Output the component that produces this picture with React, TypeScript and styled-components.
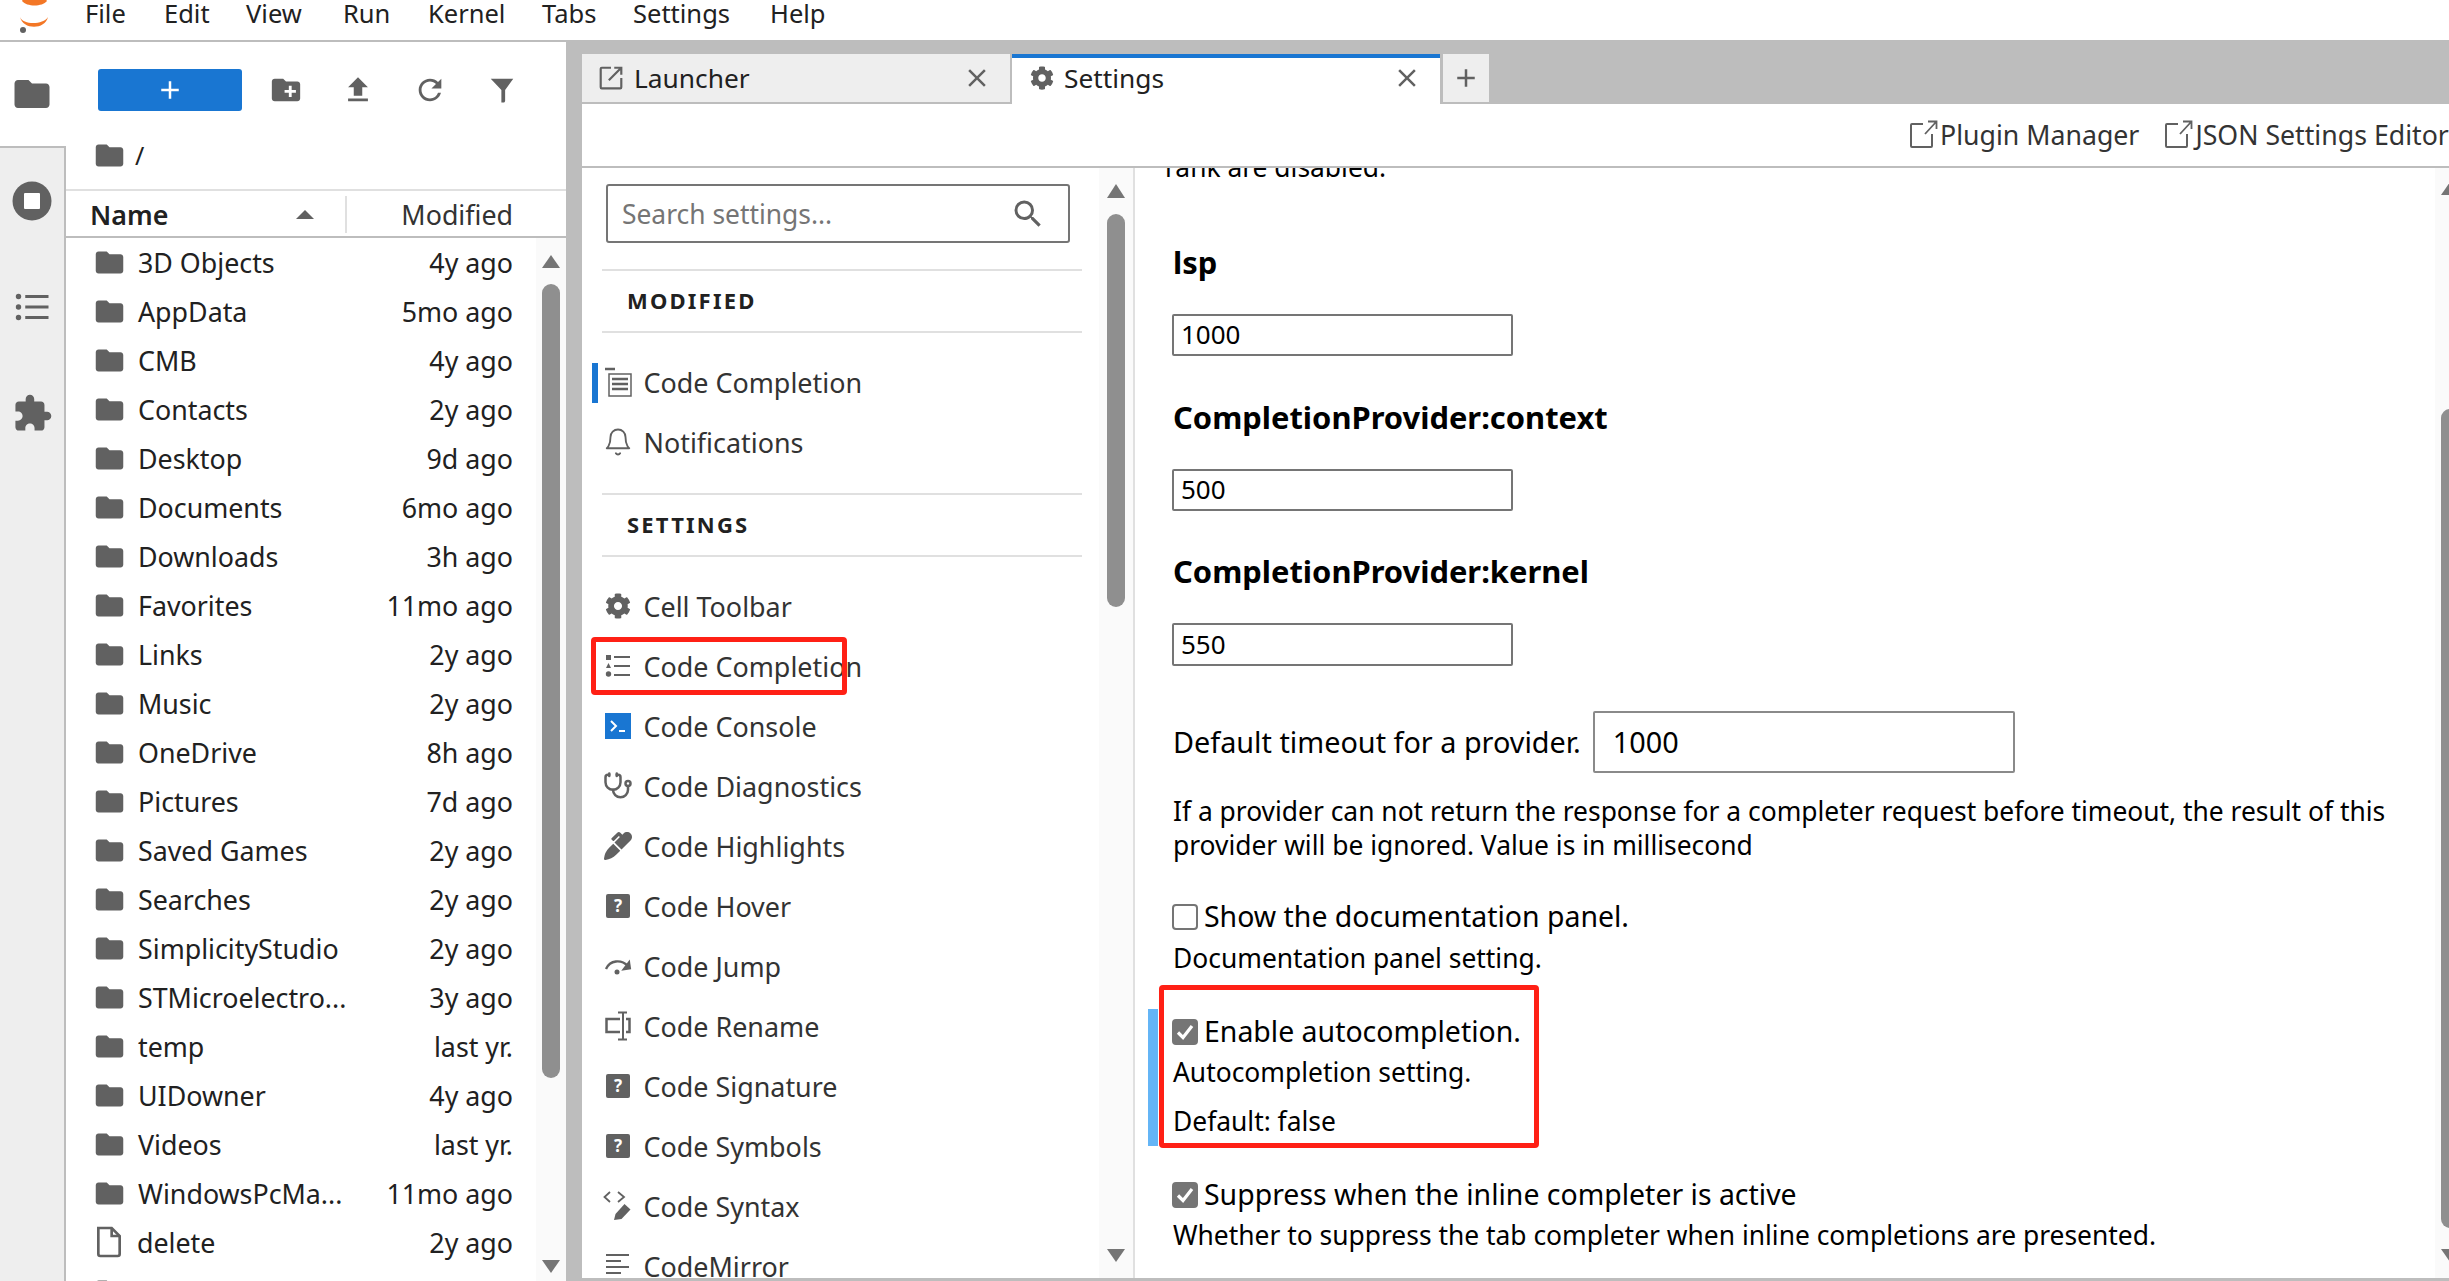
import styled, { createGlobalStyle } from "styled-components";
import type { ReactNode } from "react";
import { FaCog, FaMarker } from "react-icons/fa";
import { MdFolder, MdCreateNewFolder, MdFileUpload, MdRefresh, MdClose, MdAdd, MdSearch, MdExtension } from "react-icons/md";
import { LuStethoscope, LuBell } from "react-icons/lu";

const GlobalStyle = createGlobalStyle`
  html, body { margin: 0; padding: 0; height: 100%; overflow: hidden; background: #fff; }
  * { box-sizing: border-box; }
  body { font-family: "Noto Sans", "Open Sans", sans-serif; color: #212121; }
`;

const files: [string, string][] = [
  ["3D Objects", "4y ago"], ["AppData", "5mo ago"], ["CMB", "4y ago"], ["Contacts", "2y ago"],
  ["Desktop", "9d ago"], ["Documents", "6mo ago"], ["Downloads", "3h ago"], ["Favorites", "11mo ago"],
  ["Links", "2y ago"], ["Music", "2y ago"], ["OneDrive", "8h ago"], ["Pictures", "7d ago"],
  ["Saved Games", "2y ago"], ["Searches", "2y ago"], ["SimplicityStudio", "2y ago"],
  ["STMicroelectro...", "3y ago"], ["temp", "last yr."], ["UIDowner", "4y ago"], ["Videos", "last yr."],
  ["WindowsPcMa...", "11mo ago"],
];

const Shell = styled.div`
  position: relative;
  width: 2449px;
  height: 1281px;
  overflow: hidden;
  display: flex;
  flex-direction: column;
`;

const MenuBar = styled.div`
  height: 42px;
  flex: none;
  border-bottom: 2px solid #bdbdbd;
  display: flex;
  align-items: flex-start;
  padding-left: 18px;
  overflow: hidden;
`;

const MenuItem = styled.div<{ $w: number }>`
  width: ${(p) => p.$w}px;
  font-size: 25.5px;
  line-height: 26px;
  color: #212121;
  flex: none;
`;

const Workspace = styled.div`
  flex: 1;
  min-height: 0;
  display: flex;
  background: #bdbdbd;
`;

const ActivityBar = styled.div`
  width: 66px;
  flex: none;
  background: #eeeeee;
  border-right: 2px solid #bdbdbd;
  display: flex;
  flex-direction: column;
`;

const ActivityTab = styled.div<{ $active?: boolean }>`
  height: 106px;
  margin-right: ${(p) => (p.$active ? "-2px" : "0")};
  padding-right: ${(p) => (p.$active ? "2px" : "0")};
  background: ${(p) => (p.$active ? "#fff" : "transparent")};
  border-bottom: ${(p) => (p.$active ? "2px solid #bdbdbd" : "none")};
  display: flex;
  align-items: center;
  justify-content: center;
  color: #616161;
`;

const FilePanel = styled.div`
  width: 500px;
  flex: none;
  background: #fff;
  display: flex;
  flex-direction: column;
  overflow: hidden;
`;

const FileToolbar = styled.div`
  height: 48px;
  margin-top: 24px;
  display: flex;
  align-items: center;
  padding-left: 32px;
  flex: none;
`;

const NewButton = styled.div`
  width: 144px;
  height: 42px;
  background: #1976d2;
  border-radius: 3px;
  color: #fff;
  display: flex;
  align-items: center;
  justify-content: center;
`;

const ToolButton = styled.div<{ $first?: boolean }>`
  width: 72px;
  margin-left: ${(p) => (p.$first ? "8px" : "0")};
  display: flex;
  justify-content: center;
  color: #616161;
`;

const Crumbs = styled.div`
  height: 48px;
  margin-top: 17px;
  display: flex;
  align-items: center;
  padding-left: 27px;
  gap: 9px;
  color: #616161;
  font-size: 25px;
  flex: none;
  span { color: #212121; }
`;

const HeaderRow = styled.div`
  height: 49px;
  margin-top: 10px;
  border-top: 2px solid #e0e0e0;
  border-bottom: 2px solid #bdbdbd;
  display: flex;
  align-items: center;
  flex: none;
  font-size: 26.8px;
  padding-top: 2px;
`;

const NameHead = styled.div`
  width: 281px;
  padding-left: 24px;
  height: 37px;
  display: flex;
  align-items: center;
  justify-content: space-between;
  padding-right: 31px;
  font-weight: 600;
  border-right: 2px solid #e0e0e0;
`;

const Caret = styled.div<{ $down?: boolean; $tall?: number }>`
  width: 0;
  height: 0;
  flex: none;
  border-left: 9px solid transparent;
  border-right: 9px solid transparent;
  ${(p) =>
    p.$down
      ? `border-top: ${p.$tall || 13}px solid #757575;`
      : `border-bottom: ${p.$tall || 9}px solid ${p.$tall ? "#757575" : "#616161"};`}
`;

const ModifiedHead = styled.div`
  flex: 1;
  text-align: right;
  padding-right: 53px;
  color: #333;
`;

const FileBody = styled.div`
  flex: 1;
  min-height: 0;
  display: flex;
  overflow: hidden;
`;

const FileList = styled.div`
  width: 470px;
  flex: none;
`;

const FileRow = styled.div`
  height: 49px;
  display: flex;
  align-items: center;
  padding-left: 27px;
  padding-right: 23px;
  padding-bottom: 1px;
  font-size: 26.8px;
  color: #212121;
  svg { flex: none; color: #616161; }
`;

const FileName = styled.div`
  margin-left: 12px;
  flex: 1;
  white-space: nowrap;
`;

const FileTime = styled.div`
  white-space: nowrap;
`;

const ScrollTrack = styled.div<{ $w: number; $pad: number; $start?: boolean }>`
  width: ${(p) => p.$w}px;
  flex: none;
  background: #fafafa;
  display: flex;
  flex-direction: column;
  align-items: ${(p) => (p.$start ? "flex-start" : "center")};
  padding-left: ${(p) => p.$pad}px;
`;

const ScrollThumb = styled.div<{ $top: number; $h: number }>`
  width: 18px;
  height: ${(p) => p.$h}px;
  margin-top: ${(p) => p.$top}px;
  background: #8f8f8f;
  border-radius: 9px;
  flex: none;
`;

const Spacer = styled.div`
  flex: 1;
`;

const Main = styled.div`
  margin-left: 16px;
  flex: 1;
  min-width: 0;
  display: flex;
  flex-direction: column;
`;

const TabBar = styled.div`
  height: 62px;
  flex: none;
  padding-top: 12px;
  display: flex;
  align-items: stretch;
`;

const Tab = styled.div<{ $active?: boolean; $w: number }>`
  width: ${(p) => p.$w}px;
  flex: none;
  background: ${(p) => (p.$active ? "#fff" : "#eeeeee")};
  border-top: ${(p) => (p.$active ? "4px solid #1976d2" : "none")};
  border-right: ${(p) => (p.$active ? "none" : "2px solid #bdbdbd")};
  border-bottom: ${(p) => (p.$active ? "none" : "2px solid #bdbdbd")};
  display: flex;
  align-items: center;
  padding: ${(p) => (p.$active ? "0 18px 6px 18px" : "0 18px 0 16px")};
  font-size: 26.3px;
  color: #212121;
  svg { flex: none; color: #616161; }
`;

const TabLabel = styled.div`
  flex: 1;
  margin-left: 10px;
`;

const PlusTab = styled.div`
  width: 46px;
  margin-left: 3px;
  flex: none;
  background: #eeeeee;
  border-bottom: 2px solid #bdbdbd;
  display: flex;
  align-items: center;
  justify-content: center;
  color: #616161;
`;

const Toolbar = styled.div`
  height: 64px;
  flex: none;
  background: #fff;
  border-bottom: 2px solid #bdbdbd;
  display: flex;
  align-items: center;
  padding: 0 0 2px 1327px;
  white-space: nowrap;
  overflow: hidden;
  font-size: 26.7px;
  color: #333;
`;

const ToolLink = styled.div<{ $gap?: number }>`
  display: flex;
  align-items: center;
  margin-left: ${(p) => p.$gap || 0}px;
  flex: none;
  svg { flex: none; color: #616161; margin-right: 2px; }
`;

const SettingsBody = styled.div`
  flex: 1;
  min-height: 0;
  display: flex;
  background: #fff;
  overflow: hidden;
  border-bottom: 3px solid #bdbdbd;
`;

const Sidebar = styled.div`
  width: 517px;
  flex: none;
  padding: 16px 0 0 20px;
  overflow: hidden;
`;

const SearchBox = styled.div`
  width: 464px;
  height: 59px;
  margin-left: 4px;
  border: 2px solid #757575;
  border-radius: 3px;
  display: flex;
  align-items: center;
  justify-content: space-between;
  padding: 0 22px 0 14px;
  font-size: 26.4px;
  color: #757575;
  svg { color: #616161; }
`;

const Section = styled.div<{ $mt: number }>`
  margin-top: ${(p) => p.$mt}px;
  width: 480px;
  height: 64px;
  border-top: 2px solid #e0e0e0;
  border-bottom: 2px solid #e0e0e0;
  display: flex;
  align-items: center;
  padding: 0 0 2px 25px;
  font-size: 22px;
  font-weight: 700;
  letter-spacing: 2.2px;
  color: #212121;
`;

const NavList = styled.div<{ $mt: number }>`
  margin-top: ${(p) => p.$mt}px;
`;

const NavItem = styled.div<{ $selected?: boolean }>`
  height: 60px;
  margin-left: -10px;
  display: flex;
  align-items: center;
  position: relative;
  padding: 0 0 2px 11px;
  font-size: 26.9px;
  color: #333;
  white-space: nowrap;
  &::before {
    content: "";
    display: ${(p) => (p.$selected ? "block" : "none")};
    position: absolute;
    left: 0;
    top: 10px;
    width: 6px;
    height: 40px;
    background: #1976d2;
  }
`;

const NavIcon = styled.div`
  width: 30px;
  height: 34px;
  margin-right: 10.5px;
  flex: none;
  display: flex;
  align-items: center;
  justify-content: center;
  color: #616161;
`;

const Divider = styled.div`
  width: 2px;
  flex: none;
  background: #e0e0e0;
`;

const Form = styled.div`
  flex: 1;
  min-width: 0;
  padding-left: 38px;
  overflow: hidden;
  font-size: 26.4px;
  color: #000;
`;

const ClippedLine = styled.div`
  margin: -19px 0 0 -8px;
  height: 36px;
  line-height: 36px;
  white-space: nowrap;
`;

const FieldTitle = styled.div<{ $mt: number }>`
  margin-top: ${(p) => p.$mt}px;
  height: 40px;
  line-height: 37px;
  font-weight: 700;
  font-size: 30.9px;
`;

const TextField = styled.div<{ $h?: number }>`
  margin: 30px 0 0 -1px;
  width: 341px;
  height: ${(p) => p.$h || 42}px;
  border: 2px solid #757575;
  border-radius: 2px;
  padding: 0 0 2px 7px;
  display: flex;
  align-items: center;
  font-size: 26px;
`;

const InlineRow = styled.div`
  margin-top: 45px;
  height: 62px;
  display: flex;
  align-items: center;
  font-size: 28.8px;
`;

const InlineLabel = styled.div`
  margin-bottom: 2px;
`;

const WideField = styled.div`
  margin-left: 12px;
  width: 422px;
  height: 62px;
  border: 2px solid #8a8a8a;
  border-radius: 2px;
  padding: 0 0 2px 18px;
  display: flex;
  align-items: center;
`;

const HelpText = styled.div`
  margin-top: 21px;
  width: 1240px;
  line-height: 34px;
`;

const Line = styled.div<{ $mt: number }>`
  margin-top: ${(p) => p.$mt}px;
  height: 36px;
  padding-bottom: 2px;
  line-height: 34px;
  white-space: nowrap;
  display: flex;
  align-items: center;
`;

const CheckLine = styled(Line)`
  font-size: 28.45px;
`;

const Check = styled.div<{ $on?: boolean }>`
  width: 26px;
  height: 26px;
  margin: 2px 6px 0 -1px;
  flex: none;
  border-radius: 4px;
  border: 2px solid #757575;
  background: ${(p) => (p.$on ? "#757575" : "#fff")};
  display: flex;
  align-items: center;
  justify-content: center;
`;

const ModifiedField = styled.div`
  margin: 32px 0 0 -25px;
  padding: 5px 0 6px 15px;
  border-left: 10px solid #64b5f6;
`;

const Annotation = styled.div<{ $x: number; $y: number; $w: number; $h: number }>`
  position: absolute;
  left: ${(p) => p.$x}px;
  top: ${(p) => p.$y}px;
  width: ${(p) => p.$w}px;
  height: ${(p) => p.$h}px;
  border: 5px solid #ff2015;
  border-radius: 4px;
  pointer-events: none;
`;

const Svg = ({ size, children }: { size: number; children: ReactNode }) => (
  <svg width={size} height={size} viewBox="0 0 24 24" fill="none">{children}</svg>
);

const JupyterLogo = () => (
  <svg width="32" height="34" viewBox="0 0 32 34" style={{ display: "block", marginTop: -1 }}>
    <path d="M2 18c3 8 23 8 28 0-3 13-25 13-28 0z" fill="#f37726" />
    <path d="M4 2C9 8 24 8 29 2c-2-3-3-3-4-3H8C6-1 5 0 4 2z" fill="#f37726" />
    <circle cx="5" cy="31" r="3" fill="#616161" />
  </svg>
);

const StopIcon = () => (
  <svg width="40" height="40" viewBox="0 0 40 40">
    <circle cx="20" cy="20" r="19.5" fill="#616161" />
    <rect x="12" y="12" width="16" height="16" rx="1" fill="#fff" />
  </svg>
);

const ListIcon = ({ size }: { size: number }) => (
  <Svg size={size}>
    <circle cx="3" cy="5" r="1.8" fill="#616161" />
    <circle cx="3" cy="12" r="1.8" fill="#616161" />
    <circle cx="3" cy="19" r="1.8" fill="#616161" />
    <path d="M7.5 5H23M7.5 12H23M7.5 19H23" stroke="#616161" strokeWidth="2" />
  </Svg>
);

const FilterIcon = () => (
  <Svg size={30}>
    <path d="M3 3h18l-6.5 9v8.5c0 1-.8 1.5-1.5 1.5h-1.5v-10z" fill="#616161" />
  </Svg>
);

const FileIcon = () => (
  <Svg size={32}>
    <path d="M4 1.5h10l6 6V21c0 .8-.7 1.5-1.5 1.5h-13C4.700 22.500 4 21.800 4 21z" stroke="#616161" strokeWidth="2" />
    <path d="M14 1.500V7.500h6" stroke="#616161" strokeWidth="2" />
  </Svg>
);

const LaunchIcon = () => (
  <Svg size={26}>
    <path d="M12 2.500H3.500c-.6 0-1 .4-1 1v17c0 .6.4 1 1 1h17c.6 0 1-.4 1-1V12" stroke="#616161" strokeWidth="2" />
    <path d="M15 2.500h6.500V9M21 3L10 14" stroke="#616161" strokeWidth="2" />
  </Svg>
);

const ExternalIcon = () => (
  <svg width="29" height="29" viewBox="0 0 29 29" fill="none">
    <path d="M14 4H3c-.6 0-1 .4-1 1v21c0 .6.400 1 1 1h19c.6 0 1-.4 1-1V14" stroke="#616161" strokeWidth="2" />
    <path d="M19 1.500h8.500V9M27 2L16 14" stroke="#616161" strokeWidth="1.800" />
  </svg>
);

const CompletionDocIcon = () => (
  <svg width="28" height="30" viewBox="0 0 28 30" fill="none">
    <path d="M1 2h10" stroke="#616161" strokeWidth="2.500" />
    <rect x="5" y="7" width="22" height="22" stroke="#616161" strokeWidth="1.500" fill="#fff" />
    <path d="M8 12h16M8 17h16M8 22h16" stroke="#616161" strokeWidth="2.500" />
  </svg>
);

const CompletionListIcon = () => (
  <svg width="26" height="24" viewBox="0 0 26 24">
    <rect x="1" y="1" width="5" height="5" fill="#616161" />
    <path d="M3.500 9l2.500 5H1z" fill="#616161" />
    <circle cx="3.500" cy="20" r="2.700" fill="#616161" />
    <path d="M9 3h16M9 12h16M9 21h16" stroke="#616161" strokeWidth="2" />
  </svg>
);

const ConsoleIcon = () => (
  <svg width="26" height="26" viewBox="0 0 26 26">
    <rect width="26" height="26" fill="#1976d2" />
    <path d="M6 8l5 5-5 5" stroke="#fff" strokeWidth="2" fill="none" />
    <path d="M14 18h6" stroke="#fff" strokeWidth="2" />
  </svg>
);

const HelpIcon = () => (
  <svg width="24" height="24" viewBox="0 0 24 24">
    <rect width="24" height="24" rx="2" fill="#616161" />
    <text x="12" y="18" textAnchor="middle" fontSize="17" fontWeight="700" fill="#fff" fontFamily="Noto Sans">?</text>
  </svg>
);

const JumpIcon = () => (
  <svg width="28" height="20" viewBox="0 0 28 20" fill="none">
    <path d="M2 13C6 4 17 3 24 10" stroke="#616161" strokeWidth="2.400" />
    <path d="M26.500 4v10h-10z" fill="#616161" transform="rotate(-8 22 9)" />
    <circle cx="13" cy="16" r="2.500" fill="#616161" />
  </svg>
);

const RenameIcon = () => (
  <svg width="26" height="30" viewBox="0 0 26 30" fill="none">
    <path d="M15 8H1.500v13H15M21 8h3.500v13H21" stroke="#616161" strokeWidth="2.500" />
    <path d="M13 1.500h4.500M17.500 1.500h4.500M18 1.500v27M13 28.500h9" stroke="#616161" strokeWidth="2" />
  </svg>
);

const SyntaxIcon = () => (
  <svg width="30" height="32" viewBox="0 0 30 32" fill="none">
    <path d="M7 2L1.500 7 7 12M15 2l6 5-6 5" stroke="#616161" strokeWidth="1.800" />
    <path d="M11 30l1.500-6 9-10 6 5.500-9 9.500z" fill="#616161" />
  </svg>
);

const MirrorIcon = () => (
  <svg width="26" height="26" viewBox="0 0 26 26">
    <path d="M1 2h23M1 8h15M1 14h23M1 20h15M1 26h23" stroke="#616161" strokeWidth="2" />
  </svg>
);

const navSettings: [ReactNode, string][] = [
  [<FaCog size={26} />, "Cell Toolbar"],
  [<CompletionListIcon />, "Code Completion"],
  [<ConsoleIcon />, "Code Console"],
  [<LuStethoscope size={30} />, "Code Diagnostics"],
  [<FaMarker size={28} />, "Code Highlights"],
  [<HelpIcon />, "Code Hover"],
  [<JumpIcon />, "Code Jump"],
  [<RenameIcon />, "Code Rename"],
  [<HelpIcon />, "Code Signature"],
  [<HelpIcon />, "Code Symbols"],
  [<SyntaxIcon />, "Code Syntax"],
  [<MirrorIcon />, "CodeMirror"],
];

const CheckMark = () => (
  <svg width="18" height="16" viewBox="0 0 18 16" fill="none">
    <path d="M2 8.500l5 5L16 2" stroke="#fff" strokeWidth="3.200" />
  </svg>
);

export default function App() {
  return (
    <Shell>
      <GlobalStyle />
      <MenuBar>
        <JupyterLogo />
        <MenuItem $w={35} />
        <MenuItem $w={79}>File</MenuItem>
        <MenuItem $w={82}>Edit</MenuItem>
        <MenuItem $w={97}>View</MenuItem>
        <MenuItem $w={85}>Run</MenuItem>
        <MenuItem $w={114}>Kernel</MenuItem>
        <MenuItem $w={91}>Tabs</MenuItem>
        <MenuItem $w={137}>Settings</MenuItem>
        <MenuItem $w={80}>Help</MenuItem>
      </MenuBar>
      <Workspace>
        <ActivityBar>
          <ActivityTab $active><MdFolder size={42} /></ActivityTab>
          <ActivityTab><StopIcon /></ActivityTab>
          <ActivityTab><ListIcon size={36} /></ActivityTab>
          <ActivityTab><MdExtension size={41} /></ActivityTab>
        </ActivityBar>
        <FilePanel>
          <FileToolbar>
            <NewButton><MdAdd size={30} /></NewButton>
            <ToolButton $first><MdCreateNewFolder size={34} /></ToolButton>
            <ToolButton><MdFileUpload size={34} /></ToolButton>
            <ToolButton><MdRefresh size={34} /></ToolButton>
            <ToolButton><FilterIcon /></ToolButton>
          </FileToolbar>
          <Crumbs><MdFolder size={33} /><span>/</span></Crumbs>
          <HeaderRow>
            <NameHead>Name<Caret /></NameHead>
            <ModifiedHead>Modified</ModifiedHead>
          </HeaderRow>
          <FileBody>
            <FileList>
              {files.map(([name, time]) => (
                <FileRow key={name}>
                  <MdFolder size={33} />
                  <FileName>{name}</FileName>
                  <FileTime>{time}</FileTime>
                </FileRow>
              ))}
              <FileRow>
                <FileIcon />
                <FileName>delete</FileName>
                <FileTime>2y ago</FileTime>
              </FileRow>
              <FileRow>
                <MdFolder size={33} />
                <FileName>tutorials</FileName>
                <FileTime>2y ago</FileTime>
              </FileRow>
            </FileList>
            <ScrollTrack $w={30} $pad={0}>
              <Caret $tall={13} style={{ marginTop: 17 }} />
              <ScrollThumb $top={16} $h={794} />
              <Spacer />
              <Caret $down style={{ marginBottom: 8 }} />
            </ScrollTrack>
          </FileBody>
        </FilePanel>
        <Main>
          <TabBar>
            <Tab $w={430}>
              <LaunchIcon />
              <TabLabel>Launcher</TabLabel>
              <MdClose size={30} />
            </Tab>
            <Tab $active $w={428}>
              <FaCog size={24} />
              <TabLabel>Settings</TabLabel>
              <MdClose size={30} />
            </Tab>
            <PlusTab><MdAdd size={30} /></PlusTab>
          </TabBar>
          <Toolbar>
            <ToolLink><ExternalIcon />Plugin Manager</ToolLink>
            <ToolLink $gap={25}><ExternalIcon />JSON Settings Editor</ToolLink>
          </Toolbar>
          <SettingsBody>
            <Sidebar>
              <SearchBox>Search settings...<MdSearch size={36} /></SearchBox>
              <Section $mt={26}>MODIFIED</Section>
              <NavList $mt={20}>
                <NavItem $selected><NavIcon><CompletionDocIcon /></NavIcon>Code Completion</NavItem>
                <NavItem><NavIcon><LuBell size={34} strokeWidth={1.5} /></NavIcon>Notifications</NavItem>
              </NavList>
              <Section $mt={20}>SETTINGS</Section>
              <NavList $mt={20}>
                {navSettings.map(([icon, label]) => (
                  <NavItem key={label}><NavIcon>{icon}</NavIcon>{label}</NavItem>
                ))}
              </NavList>
            </Sidebar>
            <ScrollTrack $w={34} $pad={0}>
              <Caret $tall={14} style={{ marginTop: 16 }} />
              <ScrollThumb $top={16} $h={393} />
              <Spacer />
              <Caret $down style={{ marginBottom: 16 }} />
            </ScrollTrack>
            <Divider />
            <Form>
              <ClippedLine>rank are disabled.</ClippedLine>
              <FieldTitle $mt={59}>lsp</FieldTitle>
              <TextField>1000</TextField>
              <FieldTitle $mt={43}>CompletionProvider:context</FieldTitle>
              <TextField>500</TextField>
              <FieldTitle $mt={42}>CompletionProvider:kernel</FieldTitle>
              <TextField $h={43}>550</TextField>
              <InlineRow>
                <InlineLabel>Default timeout for a provider.</InlineLabel>
                <WideField>1000</WideField>
              </InlineRow>
              <HelpText>
                If a provider can not return the response for a completer request before timeout, the result of this provider will be ignored. Value is in millisecond
              </HelpText>
              <CheckLine $mt={37}><Check />Show the documentation panel.</CheckLine>
              <Line $mt={6}>Documentation panel setting.</Line>
              <ModifiedField>
                <CheckLine $mt={0}><Check $on><CheckMark /></Check>Enable autocompletion.</CheckLine>
                <Line $mt={5}>Autocompletion setting.</Line>
                <Line $mt={13}>Default: false</Line>
              </ModifiedField>
              <CheckLine $mt={31}><Check $on><CheckMark /></Check>Suppress when the inline completer is active</CheckLine>
              <Line $mt={5}>Whether to suppress the tab completer when inline completions are presented.</Line>
            </Form>
            <ScrollTrack $w={14} $pad={6} $start>
              <Caret $tall={13} style={{ marginTop: 14 }} />
              <ScrollThumb $top={214} $h={819} />
              <Spacer />
              <Caret $down style={{ marginBottom: 16 }} />
            </ScrollTrack>
          </SettingsBody>
        </Main>
      </Workspace>
      <Annotation $x={591} $y={637} $w={256} $h={58} />
      <Annotation $x={1159} $y={985} $w={380} $h={163} />
    </Shell>
  );
}
